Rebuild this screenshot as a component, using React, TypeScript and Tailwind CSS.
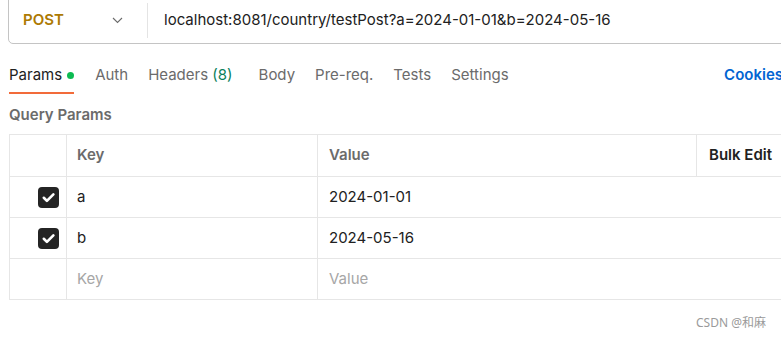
import React from 'react';

const rows = [
  { key: 'a', value: '2024-01-01' },
  { key: 'b', value: '2024-05-16' },
];

const tabs = ['Auth', 'Headers', 'Body', 'Pre-req.', 'Tests', 'Settings'];

const Check: React.FC = () => (
  <div className="w-[21px] h-[21px] rounded-[4px] bg-[#242424] flex items-center justify-center">
    <svg width="15" height="15" viewBox="0 0 16 16" fill="none">
      <path d="M3 8.3l3.3 3.3L13.2 4.6" stroke="#fff" strokeWidth="2.8" strokeLinecap="round" strokeLinejoin="round" />
    </svg>
  </div>
);

export default function App() {
  return (
    <div className="relative w-[781px] h-[339px] overflow-hidden bg-white text-[#212121] font-['Inter','Noto_Sans',sans-serif]">
      {/* request bar */}
      <div className="ml-[8px] -mt-[6px] h-[50px] w-[800px] border border-[#c4c4c4] rounded-[5px] flex items-center pt-[1px]">
        <div className="w-[139px] h-[35px] mt-[1px] flex items-center justify-between pl-[14px] pr-[24px] border-r border-[#e4e4e4]">
          <span className="text-[15px] font-semibold text-[#ad7a03]">POST</span>
          <svg width="11" height="7" viewBox="0 0 11 7" fill="none" className="mt-[1px]">
            <path d="M1 1l4.5 4.5L10 1" stroke="#6b6b6b" strokeWidth="1.1" />
          </svg>
        </div>
        <span className="pl-[16px] text-[15px] pt-[2px]">localhost:8081/country/testPost?a=2024-01-01&amp;b=2024-05-16</span>
      </div>

      {/* tabs */}
      <div className="mt-[15px] flex items-start pl-[9px] h-[35px] w-[783px] text-[15px]">
        <div className="flex flex-col">
          <div className="flex items-center h-[33px]">
            <span className="text-[#212121]">Params</span>
            <span className="ml-[5px] w-[7px] h-[7px] rounded-full bg-[#0cbb52]" />
          </div>
          <div className="h-[1.5px] bg-[#f26b3a]" />
        </div>
        <div className="flex items-center h-[33px] gap-[20px] ml-[21px] text-[#6b6b6b]">
          {tabs.map((t) =>
            t === 'Headers' ? (
              <span key={t} className="mr-[6px]">
                Headers <span className="text-[#0b7f5c]">(8)</span>
              </span>
            ) : (
              <span key={t}>{t}</span>
            ),
          )}
        </div>
        <span className="ml-auto h-[33px] flex items-center font-semibold text-[#0265d2]">Cookies</span>
      </div>

      {/* query params */}
      <div className="pl-[9px] mt-[11px] text-[15px] font-semibold text-[#6b6b6b] h-[20px] flex items-center">Query Params</div>

      <div className="ml-[9px] mt-[9px] w-[800px] border-t border-l border-[#e6e6e6] text-[15px]">
        <div className="flex h-[42px] border-b border-[#e6e6e6]">
          <div className="w-[57px] border-r border-[#e6e6e6]" />
          <div className="w-[251px] border-r border-[#e6e6e6] pl-[10px] flex items-center font-semibold text-[#6b6b6b]">Key</div>
          <div className="w-[379px] border-r border-[#e6e6e6] pl-[11px] flex items-center font-semibold text-[#6b6b6b]">Value</div>
          <div className="flex-1 pl-[12px] flex items-center font-semibold text-[#212121]">Bulk Edit</div>
        </div>
        {rows.map((r) => (
          <div key={r.key} className="flex h-[41px] border-b border-[#e6e6e6]">
            <div className="w-[57px] border-r border-[#e6e6e6] flex items-center justify-end pr-[7px]">
              <Check />
            </div>
            <div className="w-[251px] border-r border-[#e6e6e6] pl-[10px] flex items-center">{r.key}</div>
            <div className="flex-1 pl-[11px] flex items-center">{r.value}</div>
          </div>
        ))}
        <div className="flex h-[41px] border-b border-[#e6e6e6] text-[#a6a6a6]">
          <div className="w-[57px] border-r border-[#e6e6e6]" />
          <div className="w-[251px] border-r border-[#e6e6e6] pl-[10px] flex items-center">Key</div>
          <div className="flex-1 pl-[11px] flex items-center">Value</div>
        </div>
      </div>

      <span className="absolute right-[15px] bottom-[7px] text-[12px] text-[#9a9a9a] font-['Noto_Sans','Noto_Sans_CJK_SC',sans-serif]">
        CSDN @和麻
      </span>
    </div>
  );
}
